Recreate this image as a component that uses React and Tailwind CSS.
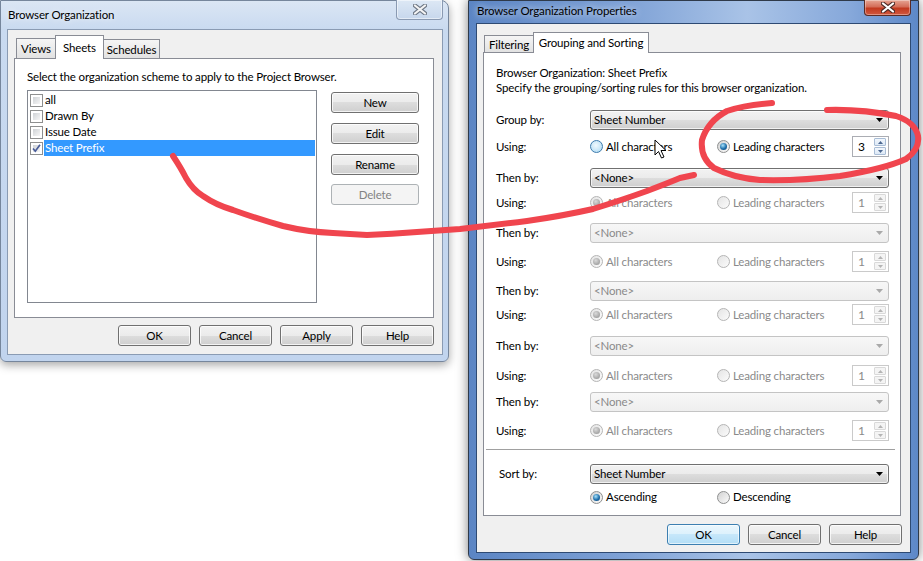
import React from 'react';

const F = "font-['Lato',sans-serif]";

function Btn({ children, w = 'w-[73px]', disabled = false, focused = false }) {
  let cls;
  if (disabled) cls = 'border-[#adb2b5] bg-[#f4f4f4] text-[#838383]';
  else if (focused)
    cls = 'border-[#3c7fb1] bg-[linear-gradient(180deg,#eaf6fd_0%,#dcf1fc_50%,#c6e7fa_50%,#b3def6_100%)] text-black shadow-[inset_0_0_0_1px_rgba(255,255,255,0.6)]';
  else
    cls = 'border-[#707070] bg-[linear-gradient(180deg,#f2f2f2_0%,#ebebeb_50%,#dddddd_50%,#cfcfcf_100%)] text-black shadow-[inset_0_0_0_1px_rgba(255,255,255,0.75)]';
  return (
    <div className={`${w} h-[21px] shrink-0 rounded-[3px] border flex items-center justify-center leading-none ${cls}`}>
      {children}
    </div>
  );
}

function Check({ checked }) {
  return (
    <div className="w-[13px] h-[13px] shrink-0 border border-[#8e8f8f] bg-white p-[2px] relative">
      <div className="w-full h-full bg-[linear-gradient(135deg,#cfd2d6,#f6f6f6)]" />
      {checked && (
        <svg className="absolute left-0 top-0" width="11" height="11" viewBox="0 0 11 11">
          <path d="M2 5.5 L4.3 8.2 L9 1.8" fill="none" stroke="#4a5d9a" strokeWidth="1.7" />
        </svg>
      )}
    </div>
  );
}

function Radio({ on = false, disabled = false, hot = false }) {
  const ring = disabled
    ? 'border-[#b5b5b5] bg-[linear-gradient(135deg,#e4e4e4,#fbfbfb)]'
    : hot
    ? 'border-[#3d7bad] bg-[radial-gradient(circle_at_45%_40%,#f0f9fe,#a9d8f3)]'
    : 'border-[#8e8f8f] bg-[linear-gradient(135deg,#d2d2d2,#fbfbfb)]';
  const dot = disabled
    ? 'bg-[radial-gradient(circle_at_40%_35%,#dadada,#8d8d8d)]'
    : 'bg-[radial-gradient(circle_at_40%_35%,#a8e2fb,#1e6fab_55%,#0b3a68)]';
  return (
    <div className={`w-[13px] h-[13px] shrink-0 rounded-full border flex items-center justify-center ${ring}`}>
      {on && <div className={`w-[7px] h-[7px] rounded-full ${dot}`} />}
    </div>
  );
}

function Combo({ text, disabled = false }) {
  return (
    <div
      className={`w-[299px] h-[20px] shrink-0 rounded-[3px] border flex items-center justify-between pl-[3px] pr-[5px] leading-none ${
        disabled
          ? 'border-[#c4c4c4] bg-[linear-gradient(180deg,#f7f7f7,#eeeeee)] text-[#8a8a8a]'
          : 'border-[#707070] bg-[linear-gradient(180deg,#f2f2f2_0%,#ebebeb_50%,#dddddd_50%,#cfcfcf_100%)] text-black shadow-[inset_0_0_0_1px_rgba(255,255,255,0.7)]'
      }`}
    >
      <span>{text}</span>
      <svg width="7" height="4" viewBox="0 0 7 4">
        <path d="M0 0h7L3.5 4z" fill={disabled ? '#a9a9a9' : '#000'} />
      </svg>
    </div>
  );
}

function SpinBtn({ up, disabled }) {
  return (
    <div
      className={`h-[8px] rounded-[1px] border flex items-center justify-center ${
        disabled ? 'border-[#d9d9d9] bg-[#f4f4f4]' : 'border-[#a9bdd6] bg-[linear-gradient(180deg,#f2f7fd,#dde9f6)]'
      }`}
    >
      <svg width="5" height="3" viewBox="0 0 5 3">
        <path d={up ? 'M0 3h5L2.5 0z' : 'M0 0h5L2.5 3z'} fill={disabled ? '#b4b4b4' : '#4c6790'} />
      </svg>
    </div>
  );
}

function Spin({ value, disabled = false }) {
  return (
    <div className={`w-[37px] h-[21px] shrink-0 border flex bg-white ${disabled ? 'border-[#cacaca]' : 'border-[#abadb3]'}`}>
      <div className={`flex-1 flex items-center pl-[5px] text-[12px] leading-none ${disabled ? 'text-[#8a8a8a]' : 'text-black'}`}>
        {value}
      </div>
      <div className="w-[14px] flex flex-col justify-center gap-px pr-[2px]">
        <SpinBtn up disabled={disabled} />
        <SpinBtn disabled={disabled} />
      </div>
    </div>
  );
}

function ThenBy({ mt, disabled = true }) {
  return (
    <div className={`flex items-center h-[20px] ${mt}`}>
      <div className="w-[94px] shrink-0">Then by:</div>
      <Combo text="<None>" disabled={disabled} />
    </div>
  );
}

function Using({ mt, disabled = true, allOn = true, leadOn = false, hot = false, value = '1' }) {
  const t = disabled ? 'text-[#8a8a8a]' : 'text-black';
  return (
    <div className={`flex items-center h-[21px] ${mt}`}>
      <div className="w-[94px] shrink-0">Using:</div>
      <div className={`w-[127px] shrink-0 flex items-center gap-[3px] ${t}`}>
        <Radio on={allOn} disabled={disabled} hot={hot} />
        <span>All characters</span>
      </div>
      <div className={`w-[135px] shrink-0 flex items-center gap-[3px] ${t}`}>
        <Radio on={leadOn} disabled={disabled} />
        <span>Leading characters</span>
      </div>
      <Spin value={value} disabled={disabled} />
    </div>
  );
}

function Tab({ sel = false, cls, children }) {
  return (
    <div
      className={`${cls} shrink-0 border border-b-0 border-[#898c95] flex items-center justify-center leading-none ${
        sel ? 'bg-white relative z-10' : 'mb-px bg-[linear-gradient(180deg,#f5f5f5,#e2e2e2)]'
      }`}
    >
      {children}
    </div>
  );
}

function CloseX({ color = '#fff', edge = '#3a3a3a' }) {
  return (
    <svg width="14" height="11" viewBox="0 0 14 11">
      <path d="M2 1.5 L12 9.5 M12 1.5 L2 9.5" stroke={edge} strokeWidth="4.2" strokeLinecap="round" />
      <path d="M2 1.5 L12 9.5 M12 1.5 L2 9.5" stroke={color} strokeWidth="2.2" strokeLinecap="round" />
    </svg>
  );
}

function LeftDialog() {
  const items = ['all', 'Drawn By', 'Issue Date', 'Sheet Prefix'];
  return (
    <div className="absolute left-0 top-0 w-[449px] h-[362px] rounded-tr-[8px] rounded-b-[6px] border border-[#76869c] bg-[linear-gradient(180deg,#dbe6f4_0%,#c9daf0_8%,#c1d4ee_100%)] shadow-[0_3px_10px_rgba(0,0,0,0.35)] flex flex-col">
      <div className="h-[28px] flex items-center pl-[7px] text-black relative">
        <span className="[text-shadow:0_0_6px_rgba(255,255,255,0.9)]">Browser Organization</span>
        <div className="absolute right-[5px] top-[-1px] w-[47px] h-[20px] rounded-b-[4px] border border-t-0 border-[#8a9ab2] bg-[linear-gradient(180deg,#dde8f5,#c7d7ec)] shadow-[inset_0_0_0_1px_rgba(255,255,255,0.5)] flex items-center justify-center">
          <CloseX color="#f4f4f4" edge="#6d7684" />
        </div>
      </div>
      <div className="ml-[6px] w-[436px] h-[326px] border border-[#8a9bb3] bg-[#f0f0f0] flex flex-col">
        <div className="ml-[6px] mt-[5px] h-[24px] flex items-end pl-[2px] relative z-10">
          <Tab cls="w-[40px] h-[20px] pt-[1px]">Views</Tab>
          <Tab sel cls="w-[49px] h-[24px] -ml-px">Sheets</Tab>
          <Tab cls="w-[57px] h-[19px] -ml-px pt-[1px]">Schedules</Tab>
        </div>
        <div className="ml-[6px] -mt-px w-[420px] h-[260px] border border-[#898c95] bg-white pl-[12px] pt-[10px] flex flex-col">
          <div className="leading-[15px]">Select the organization scheme to apply to the Project Browser.</div>
          <div className="flex mt-[6px]">
            <div className="w-[290px] h-[213px] border border-[#828790] bg-white pt-px pl-[2px] flex flex-col">
              {items.map((t, i) => (
                <div key={t} className="h-[16px] flex items-center">
                  <Check checked={i === 3} />
                  <div
                    className={`h-[16px] flex items-center pl-px ml-px ${
                      i === 3 ? 'flex-1 mr-px bg-[#3399ff] text-white' : ''
                    }`}
                  >
                    {t}
                  </div>
                </div>
              ))}
            </div>
            <div className="ml-[14px] mt-[2px] flex flex-col gap-[10px]">
              <Btn w="w-[88px]">New</Btn>
              <Btn w="w-[88px]">Edit</Btn>
              <Btn w="w-[88px]">Rename</Btn>
              <div className="-mt-px">
                <Btn w="w-[88px]" disabled>
                  Delete
                </Btn>
              </div>
            </div>
          </div>
        </div>
        <div className="ml-[6px] mt-[7px] w-[420px] flex justify-end gap-[8px]">
          <Btn>OK</Btn>
          <Btn>Cancel</Btn>
          <Btn>Apply</Btn>
          <Btn>Help</Btn>
        </div>
      </div>
    </div>
  );
}

function RightDialog() {
  return (
    <div className="absolute left-[468px] top-0 w-[451px] h-[560px] rounded-b-[6px] border border-[#2f3a4a] bg-[linear-gradient(90deg,#5b85c4_0%,#7fa2d6_35%,#a9c3e7_62%,#86a8da_85%,#5d88c8_100%)] shadow-[0_0_12px_rgba(0,0,0,0.5)] flex flex-col">
      <div className="h-[22px] flex items-start pt-[2px] pl-[8px] text-black relative">
        <span className="leading-[15px] [text-shadow:0_0_7px_rgba(255,255,255,0.95)]">Browser Organization Properties</span>
        <div className="absolute right-[7px] top-[-1px] w-[47px] h-[16px] rounded-b-[4px] border border-t-0 border-[#5a2a24] bg-[linear-gradient(180deg,#e6a594_0%,#d46d58_45%,#c2391f_55%,#d0583f_100%)] shadow-[inset_0_0_0_1px_rgba(255,255,255,0.35)] flex items-center justify-center">
          <CloseX color="#ffffff" edge="#4d2a26" />
        </div>
      </div>
      <div className="ml-[7px] w-[435px] h-[530px] border border-[#2e4a73] bg-[#f0f0f0] flex flex-col">
        <div className="ml-[6px] mt-[8px] h-[21px] flex items-end pl-px relative z-10">
          <Tab cls="w-[50px] h-[17px] pt-[1px]">Filtering</Tab>
          <Tab sel cls="w-[116px] h-[21px] -ml-px">Grouping and Sorting</Tab>
        </div>
        <div className="ml-[6px] -mt-px w-[418px] h-[464px] border border-[#898c95] bg-white pl-[12px] pt-[12px] flex flex-col">
          <div className="leading-[15px]">Browser Organization: Sheet Prefix</div>
          <div className="leading-[15px]">Specify the grouping/sorting rules for this browser organization.</div>
          <div className="flex items-center h-[20px] mt-[15px]">
            <div className="w-[94px] shrink-0">Group by:</div>
            <Combo text="Sheet Number" />
          </div>
          <Using mt="mt-[6px]" disabled={false} allOn={false} leadOn hot value="3" />
          <ThenBy mt="mt-[11px]" disabled={false} />
          <Using mt="mt-[4px]" />
          <ThenBy mt="mt-[10px]" />
          <Using mt="mt-[8px]" />
          <ThenBy mt="mt-[9px]" />
          <Using mt="mt-[3px]" />
          <ThenBy mt="mt-[11px]" />
          <Using mt="mt-[9px]" />
          <ThenBy mt="mt-[6px]" />
          <Using mt="mt-[8px]" />
          <div className="-ml-[10px] w-[409px] mt-[8px] h-[2px] border-t border-[#a0a0a0] border-b border-b-white" />
          <div className="flex items-center h-[20px] mt-[13px]">
            <div className="w-[94px] shrink-0 pl-[3px]">Sort by:</div>
            <Combo text="Sheet Number" />
          </div>
          <div className="flex items-center h-[16px] mt-[5px] pl-[94px]">
            <div className="w-[127px] shrink-0 flex items-center gap-[3px]">
              <Radio on />
              <span>Ascending</span>
            </div>
            <div className="flex items-center gap-[3px]">
              <Radio />
              <span>Descending</span>
            </div>
          </div>
        </div>
        <div className="ml-[6px] mt-[8px] w-[419px] flex justify-end gap-[8px]">
          <Btn focused>OK</Btn>
          <Btn>Cancel</Btn>
          <Btn>Help</Btn>
        </div>
      </div>
    </div>
  );
}

function Annotation() {
  return (
    <svg className="absolute left-0 top-0 pointer-events-none z-50" width="923" height="561" viewBox="0 0 923 561">
      <g fill="none" stroke="#f0454e" strokeWidth="6" strokeLinecap="round" strokeLinejoin="round">
        <path d="M173 156 Q181 168 186 178 Q193 190 203 196 Q216 205 233 210 Q258 219 283 226 Q308 232 333 233 L367 235 Q392 234 417 232 L460 229 Q495 225 527 221 Q562 216 593 209 Q622 200 647 191 Q668 183 680 178 L694 175" />
        <path d="M772 103 Q745 105 727 111 Q708 121 702 140 Q700 158 714 168 Q734 178 760 180 Q800 181 840 176 Q884 169 906 159 Q920 149 918 136 Q915 122 896 116 Q862 109 827 110" />
      </g>
      <path
        d="M655 140 L655 155 L658.5 151.5 L661.5 158 L664 157 L661 150.5 L666 150.5 Z"
        fill="#ffffff"
        stroke="#000000"
        strokeWidth="1"
        strokeLinejoin="round"
      />
    </svg>
  );
}

export default function App() {
  return (
    <div className={`relative w-[923px] h-[561px] overflow-hidden bg-white text-[11.5px] tracking-[-0.15px] text-black ${F}`}>
      <LeftDialog />
      <RightDialog />
      <Annotation />
    </div>
  );
}
